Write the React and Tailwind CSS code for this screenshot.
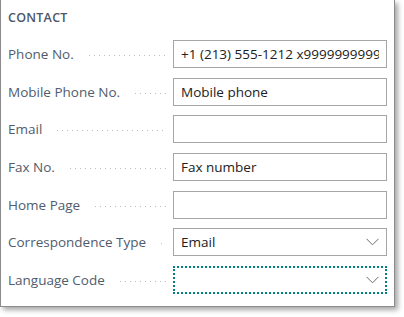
const rows = [
  { label: 'Phone No.', value: '+1 (213) 555-1212 x9999999999' },
  { label: 'Mobile Phone No.', value: 'Mobile phone' },
  { label: 'Email', value: '' },
  { label: 'Fax No.', value: 'Fax number' },
  { label: 'Home Page', value: '' },
  { label: 'Correspondence Type', value: 'Email', select: true },
  { label: 'Language Code', value: '', select: true, focused: true },
];

function Chevron() {
  return (
    <svg width="13" height="8" viewBox="0 0 13 8" className="shrink-0">
      <polyline points="0.5,0.8 6.5,6.8 12.5,0.8" fill="none" stroke="#6b6b6b" strokeWidth="1" />
    </svg>
  );
}

function Field({ row }) {
  const box = row.focused
    ? 'border-2 border-dotted border-[#00807f] px-[6px]'
    : 'border border-[#a6a6a6] px-[7px]';
  return (
    <div className={`w-[214px] h-[28px] flex items-center bg-white ${box}`}>
      <div className="flex-1 overflow-hidden whitespace-nowrap text-[13.5px] text-[#212121]">
        {row.value}
      </div>
      {row.select && <Chevron />}
    </div>
  );
}

export default function App() {
  return (
    <div className="bg-white w-[404px] h-[317px] font-['Segoe_UI','Open_Sans',sans-serif]">
      <div className="w-[395px] h-[307px] border-l border-r border-b border-[#8c8c8c] shadow-[3px_3px_5px_rgba(0,0,0,0.35)] bg-white pl-[7px] pr-[7px]">
        <div className="pt-[9px] h-[40px] text-[12.5px] font-semibold text-[#4c5667] tracking-[0.02em]">
          CONTACT
        </div>
        <div className="flex flex-col gap-[9.7px]">
          {rows.map((row) => (
            <div key={row.label} className="flex items-center">
              <div className="w-[165px] flex items-center pr-[7px]">
                <span className="text-[13.5px] text-[#505c6d] whitespace-nowrap">{row.label}</span>
                <div className="flex-1 ml-[15px] mt-[3px] h-px bg-[linear-gradient(to_right,#bdbdbd_1px,transparent_1px)] bg-[length:5px_1px] bg-repeat-x" />
              </div>
              <Field row={row} />
            </div>
          ))}
        </div>
      </div>
    </div>
  );
}
